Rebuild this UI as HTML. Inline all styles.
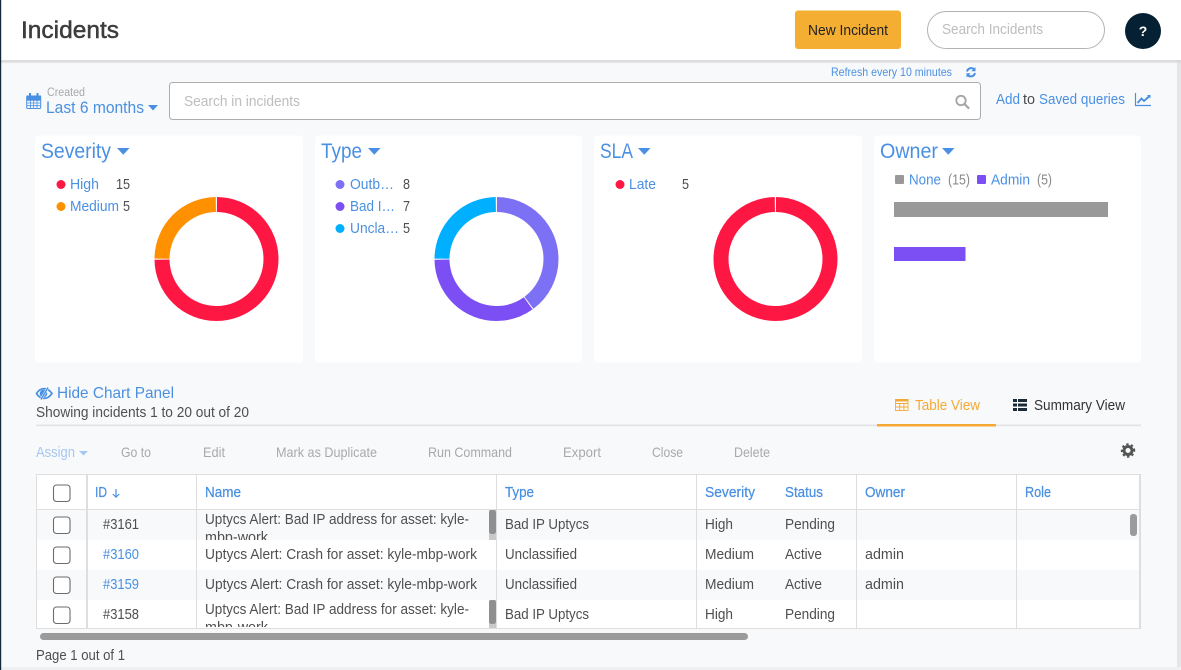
<!DOCTYPE html>
<html><head><meta charset="utf-8"><title>Incidents</title>
<style>
html,body{margin:0;padding:0;width:1181px;height:670px;overflow:hidden;background:#f8f9fb}
svg{display:block;filter:blur(.3px)}
text{font-family:"Liberation Sans",sans-serif;font-size:15px;fill:#4f4f4f}
.b{fill:#4a90e2}
.t{font-size:21px;fill:#4a90e2}
.g{fill:#a9a9a9;font-size:14px}
.h{fill:#4a90e2;font-size:15px;stroke:#4a90e2;stroke-width:.25px}
</style></head><body>
<svg width="1181" height="670" viewBox="0 0 1181 670" xmlns="http://www.w3.org/2000/svg">
<defs><filter id="s" x="-5%" y="-100%" width="110%" height="300%"><feGaussianBlur stdDeviation="0.8"/></filter>
<clipPath id="r1"><rect x="197" y="510" width="292" height="30"/></clipPath>
<clipPath id="r4"><rect x="197" y="600" width="292" height="27"/></clipPath></defs>
<rect width="1181" height="670" fill="#f8f9fb"/>
<rect x="1177" y="60" width="4" height="610" fill="#e6e6e8"/>
<rect x="0" y="667" width="1181" height="3" fill="#eef0f1"/>
<rect x="0" y="60" width="1181" height="2.500" fill="#d6d6d8" filter="url(#s)"/>
<rect width="1181" height="60" fill="#fff"/>
<rect width="1.200" height="670" fill="#14293c"/>

<text x="21" y="38" style="font-size:24px;fill:#3d3d3d;stroke:#3d3d3d;stroke-width:.5px" textLength="98" lengthAdjust="spacingAndGlyphs">Incidents</text>
<rect x="795" y="10.500" width="106" height="38.500" rx="3" fill="#f4ae32"/>
<text x="808" y="35" style="fill:#222" textLength="80" lengthAdjust="spacingAndGlyphs">New Incident</text>
<rect x="927.500" y="11.500" width="177" height="37" rx="18.500" fill="#fff" stroke="#b3b3b3"/>
<text x="942" y="34" style="fill:#bdbdbd" textLength="101" lengthAdjust="spacingAndGlyphs">Search Incidents</text>
<circle cx="1143" cy="31" r="18" fill="#062033"/>
<text x="1143" y="36" text-anchor="middle" font-weight="bold" style="font-size:14px;fill:#fff">?</text>

<text x="831" y="76" class="b" style="font-size:12px" textLength="121" lengthAdjust="spacingAndGlyphs">Refresh every 10 minutes</text>
<g fill="none" stroke="#4a90e2" stroke-width="2">
<path d="M967 71.500a4.300 4.300 0 0 1 7.500-1.800"/><path d="M975 73a4.300 4.300 0 0 1-7.500 1.800"/></g>
<path d="M975.500 67v4.200h-4.200zM966.500 77.500v-4.200h4.200z" fill="#4a90e2"/>

<g fill="none" stroke="#4a90e2"><rect x="26.700" y="96" width="14" height="12.500" rx="1"/>
<path d="M27 100.500h13.500M27 103h13.500M27 105.700h13.500M30.500 100v8M33.700 100v8M37 100v8" stroke-width=".8"/></g>
<rect x="26.500" y="95.500" width="14.500" height="4.500" fill="#4a90e2"/>
<rect x="29" y="93" width="2" height="4" fill="#4a90e2"/><rect x="36.500" y="93" width="2" height="4" fill="#4a90e2"/>
<text x="47" y="96" style="font-size:11.500px;fill:#a9a9a9" textLength="38" lengthAdjust="spacingAndGlyphs">Created</text>
<text x="46" y="113" class="b" style="font-size:17px" textLength="98" lengthAdjust="spacingAndGlyphs">Last 6 months</text>
<path d="M148 105h10l-5 5.500z" fill="#4a90e2"/>
<rect x="169.500" y="82.500" width="811" height="37" rx="3" fill="#fff" stroke="#adadad"/>
<text x="184" y="106" style="fill:#bdbdbd" textLength="116" lengthAdjust="spacingAndGlyphs">Search in incidents</text>
<circle cx="961" cy="100.500" r="4.700" fill="none" stroke="#a5a5a5" stroke-width="1.800"/>
<path d="M964.500 104l4 4" stroke="#a5a5a5" stroke-width="2.200" stroke-linecap="round"/>
<text x="996" y="104" class="b" textLength="24" lengthAdjust="spacingAndGlyphs">Add</text>
<text x="1023" y="104" style="fill:#4a4a4a" textLength="12" lengthAdjust="spacingAndGlyphs">to</text>
<text x="1039" y="104" class="b" textLength="86" lengthAdjust="spacingAndGlyphs">Saved queries</text>
<path d="M1135.500 93v12.500h15.500" fill="none" stroke="#4a90e2" stroke-width="1.200"/>
<path d="M1137.500 103l4-4.500 2.500 2.500 5.500-5" fill="none" stroke="#4a90e2" stroke-width="1.900"/>
<path d="M1147 95h3.500v3.500z" fill="#4a90e2"/>

<g fill="#fff"><rect x="35" y="135.500" width="268" height="227" rx="4"/><rect x="315" y="135.500" width="267" height="227" rx="4"/><rect x="594" y="135.500" width="268" height="227" rx="4"/><rect x="874" y="135.500" width="267" height="227" rx="4"/></g>

<text x="41" y="158" class="t" textLength="70" lengthAdjust="spacingAndGlyphs">Severity</text><path d="M117 148h12.500l-6.200 6.800z" fill="#4a90e2"/>
<text x="321" y="158" class="t" textLength="41" lengthAdjust="spacingAndGlyphs">Type</text><path d="M368 148h12.500l-6.200 6.800z" fill="#4a90e2"/>
<text x="600" y="158" class="t" textLength="33" lengthAdjust="spacingAndGlyphs">SLA</text><path d="M638 148h12.500l-6.200 6.800z" fill="#4a90e2"/>
<text x="880" y="158" class="t" textLength="58" lengthAdjust="spacingAndGlyphs">Owner</text><path d="M942 148h12.500l-6.200 6.800z" fill="#4a90e2"/>

<circle cx="61" cy="184.500" r="4.500" fill="#ff1744"/><text x="70" y="189" class="b" textLength="29" lengthAdjust="spacingAndGlyphs">High</text><text x="116" y="189" textLength="14" lengthAdjust="spacingAndGlyphs">15</text>
<circle cx="61" cy="206.500" r="4.500" fill="#ff9000"/><text x="70" y="211" class="b" textLength="49" lengthAdjust="spacingAndGlyphs">Medium</text><text x="123" y="211" textLength="7" lengthAdjust="spacingAndGlyphs">5</text>
<circle cx="340" cy="184.500" r="4.500" fill="#7c71f5"/><text x="350" y="189" class="b" textLength="44" lengthAdjust="spacingAndGlyphs">Outb…</text><text x="403" y="189" textLength="7" lengthAdjust="spacingAndGlyphs">8</text>
<circle cx="340" cy="206.500" r="4.500" fill="#7c4ff5"/><text x="350" y="211" class="b" textLength="45" lengthAdjust="spacingAndGlyphs">Bad I…</text><text x="403" y="211" textLength="7" lengthAdjust="spacingAndGlyphs">7</text>
<circle cx="340" cy="228.500" r="4.500" fill="#00b0ff"/><text x="350" y="233" class="b" textLength="49" lengthAdjust="spacingAndGlyphs">Uncla…</text><text x="403" y="233" textLength="7" lengthAdjust="spacingAndGlyphs">5</text>
<circle cx="620" cy="184.500" r="4.500" fill="#ff1744"/><text x="629" y="189" class="b" textLength="27" lengthAdjust="spacingAndGlyphs">Late</text><text x="682" y="189" textLength="7" lengthAdjust="spacingAndGlyphs">5</text>

<g fill="none" stroke-width="15">
<circle cx="216.500" cy="259" r="54.500" pathLength="360" stroke="#ff1744" stroke-dasharray="269 91" stroke-dashoffset="-.5" transform="rotate(-90 216.500 259)"/>
<circle cx="216.500" cy="259" r="54.500" pathLength="360" stroke="#ff9000" stroke-dasharray="89 271" stroke-dashoffset="-270.500" transform="rotate(-90 216.500 259)"/>
<circle cx="496.500" cy="259" r="54.500" pathLength="360" stroke="#7c71f5" stroke-dasharray="143 217" stroke-dashoffset="-.5" transform="rotate(-90 496.500 259)"/>
<circle cx="496.500" cy="259" r="54.500" pathLength="360" stroke="#7c4ff5" stroke-dasharray="125 235" stroke-dashoffset="-144.500" transform="rotate(-90 496.500 259)"/>
<circle cx="496.500" cy="259" r="54.500" pathLength="360" stroke="#00b0ff" stroke-dasharray="89 271" stroke-dashoffset="-270.500" transform="rotate(-90 496.500 259)"/>
<circle cx="775.500" cy="259" r="54.500" pathLength="360" stroke="#ff1744" stroke-dasharray="359 1" stroke-dashoffset="-.5" transform="rotate(-90 775.500 259)"/>
</g>

<rect x="895" y="175" width="9" height="9" rx="1" fill="#999"/><text x="909" y="184.500" class="b" textLength="32" lengthAdjust="spacingAndGlyphs">None</text><text x="948" y="184.500" style="fill:#8a8a8a" textLength="22" lengthAdjust="spacingAndGlyphs">(15)</text>
<rect x="977" y="175" width="9" height="9" rx="1" fill="#7c4ff5"/><text x="991" y="184.500" class="b" textLength="39" lengthAdjust="spacingAndGlyphs">Admin</text><text x="1037" y="184.500" style="fill:#8a8a8a" textLength="15" lengthAdjust="spacingAndGlyphs">(5)</text>
<rect x="894" y="202" width="214" height="15" fill="#999"/>
<rect x="894" y="247" width="71.500" height="14" fill="#7c4ff5"/>

<path d="M36.500 393.500c4-6.500 11-6.500 15.500 0-4.500 6.500-11.500 6.500-15.500 0z" fill="none" stroke="#4a90e2" stroke-width="1.700"/>
<circle cx="43.500" cy="393.500" r="3.800" fill="#4a90e2"/>
<path d="M41 399.500l7-12" stroke="#f8f9fb" stroke-width="2.400"/><path d="M41 399.500l7-12" stroke="#4a90e2" stroke-width="1.400"/>
<text x="57" y="398" class="b" style="font-size:16px" textLength="117" lengthAdjust="spacingAndGlyphs">Hide Chart Panel</text>
<text x="36" y="417" style="font-size:14.500px" textLength="213" lengthAdjust="spacingAndGlyphs">Showing incidents 1 to 20 out of 20</text>
<rect x="36" y="424.500" width="1105" height="1.800" fill="#e4e4e4"/>
<rect x="877" y="424" width="119" height="2.500" fill="#f5a935"/>
<g fill="none" stroke="#f5a935" stroke-width=".9"><rect x="895.500" y="399.500" width="12.500" height="11"/><path d="M895.500 403.500h12.500M895.500 407h12.500M899.700 403v8M903.900 403v8"/></g>
<rect x="895" y="399" width="13.500" height="2.500" fill="#f5a935"/>
<text x="915" y="410" style="fill:#f5a935" textLength="65" lengthAdjust="spacingAndGlyphs">Table View</text>
<g fill="#1c2b3a"><rect x="1013" y="399" width="4" height="3"/><rect x="1018" y="399" width="9" height="3"/><rect x="1013" y="403.500" width="4" height="3"/><rect x="1018" y="403.500" width="9" height="3"/><rect x="1013" y="408" width="4" height="3"/><rect x="1018" y="408" width="9" height="3"/></g>
<text x="1034" y="410" style="fill:#333" textLength="91" lengthAdjust="spacingAndGlyphs">Summary View</text>

<text x="36" y="457" style="font-size:14.500px;fill:#a6c8f0" textLength="39" lengthAdjust="spacingAndGlyphs">Assign</text>
<path d="M79 451h9l-4.500 4.500z" fill="#a6c8f0"/>
<text x="121" y="457" class="g" textLength="30" lengthAdjust="spacingAndGlyphs">Go to</text>
<text x="203" y="457" class="g" textLength="22" lengthAdjust="spacingAndGlyphs">Edit</text>
<text x="276" y="457" class="g" textLength="101" lengthAdjust="spacingAndGlyphs">Mark as Duplicate</text>
<text x="428" y="457" class="g" textLength="84" lengthAdjust="spacingAndGlyphs">Run Command</text>
<text x="563" y="457" class="g" textLength="38" lengthAdjust="spacingAndGlyphs">Export</text>
<text x="652" y="457" class="g" textLength="31" lengthAdjust="spacingAndGlyphs">Close</text>
<text x="734" y="457" class="g" textLength="36" lengthAdjust="spacingAndGlyphs">Delete</text>
<circle cx="1128" cy="450.500" r="4" fill="none" stroke="#555" stroke-width="3"/>
<circle cx="1128" cy="450.500" r="6" fill="none" stroke="#555" stroke-width="2.400" pathLength="32" stroke-dasharray="2 2" stroke-dashoffset="1"/>

<rect x="36.500" y="474.500" width="1104" height="154" fill="#fff" stroke="#dedede"/>
<rect x="37" y="510" width="1102" height="30" fill="#f8f9fb"/>
<rect x="37" y="570" width="1102" height="30" fill="#f8f9fb"/>
<text x="103" y="529" textLength="36" lengthAdjust="spacingAndGlyphs">#3161</text>
<text x="103" y="559" class="b" textLength="36" lengthAdjust="spacingAndGlyphs">#3160</text>
<text x="103" y="589" class="b" textLength="36" lengthAdjust="spacingAndGlyphs">#3159</text>
<text x="103" y="619" textLength="36" lengthAdjust="spacingAndGlyphs">#3158</text>
<text x="205" y="524" textLength="264" lengthAdjust="spacingAndGlyphs">Uptycs Alert: Bad IP address for asset: kyle-</text>
<text x="205" y="542" clip-path="url(#r1)" textLength="63" lengthAdjust="spacingAndGlyphs">mbp-work</text>
<text x="205" y="559" textLength="272" lengthAdjust="spacingAndGlyphs">Uptycs Alert: Crash for asset: kyle-mbp-work</text>
<text x="205" y="589" textLength="272" lengthAdjust="spacingAndGlyphs">Uptycs Alert: Crash for asset: kyle-mbp-work</text>
<text x="205" y="614" textLength="264" lengthAdjust="spacingAndGlyphs">Uptycs Alert: Bad IP address for asset: kyle-</text>
<text x="205" y="632" clip-path="url(#r4)" textLength="63" lengthAdjust="spacingAndGlyphs">mbp-work</text>
<text x="505" y="529" textLength="84" lengthAdjust="spacingAndGlyphs">Bad IP Uptycs</text>
<text x="505" y="559" textLength="72" lengthAdjust="spacingAndGlyphs">Unclassified</text>
<text x="505" y="589" textLength="72" lengthAdjust="spacingAndGlyphs">Unclassified</text>
<text x="505" y="619" textLength="84" lengthAdjust="spacingAndGlyphs">Bad IP Uptycs</text>
<text x="705" y="529" textLength="28" lengthAdjust="spacingAndGlyphs">High</text>
<text x="705" y="559" textLength="49" lengthAdjust="spacingAndGlyphs">Medium</text>
<text x="705" y="589" textLength="49" lengthAdjust="spacingAndGlyphs">Medium</text>
<text x="705" y="619" textLength="28" lengthAdjust="spacingAndGlyphs">High</text>
<text x="785" y="529" textLength="50" lengthAdjust="spacingAndGlyphs">Pending</text>
<text x="785" y="559" textLength="37" lengthAdjust="spacingAndGlyphs">Active</text>
<text x="785" y="589" textLength="37" lengthAdjust="spacingAndGlyphs">Active</text>
<text x="785" y="619" textLength="50" lengthAdjust="spacingAndGlyphs">Pending</text>
<text x="865" y="559" textLength="39" lengthAdjust="spacingAndGlyphs">admin</text>
<text x="865" y="589" textLength="39" lengthAdjust="spacingAndGlyphs">admin</text>

<text x="95" y="497" class="h" textLength="12" lengthAdjust="spacingAndGlyphs">ID</text>
<path d="M116 489v8M112.800 494l3.200 3.200 3.200-3.200" fill="none" stroke="#4a90e2" stroke-width="1.200"/>
<text x="205" y="497" class="h" textLength="36" lengthAdjust="spacingAndGlyphs">Name</text>
<text x="505" y="497" class="h" textLength="29" lengthAdjust="spacingAndGlyphs">Type</text>
<text x="705" y="497" class="h" textLength="50" lengthAdjust="spacingAndGlyphs">Severity</text>
<text x="785" y="497" class="h" textLength="38" lengthAdjust="spacingAndGlyphs">Status</text>
<text x="865" y="497" class="h" textLength="40" lengthAdjust="spacingAndGlyphs">Owner</text>
<text x="1025" y="497" class="h" textLength="26" lengthAdjust="spacingAndGlyphs">Role</text>

<rect x="37" y="509" width="1102" height="1" fill="#dedede"/>
<rect x="86" y="475" width="2" height="153" fill="#dedede"/>
<g fill="#dedede"><rect x="196" y="475" width="1" height="153"/><rect x="496" y="475" width="1" height="153"/><rect x="696" y="475" width="1" height="153"/><rect x="856" y="475" width="1" height="153"/><rect x="1016" y="475" width="1" height="153"/><rect x="1139" y="475" width="2" height="153"/></g>
<g fill="#fff" stroke="#6b6b6b" stroke-width="1.100">
<rect x="53.500" y="485" width="16.500" height="16.500" rx="3"/><rect x="53.500" y="517" width="16.500" height="16.500" rx="3"/><rect x="53.500" y="547" width="16.500" height="16.500" rx="3"/><rect x="53.500" y="577" width="16.500" height="16.500" rx="3"/><rect x="53.500" y="607" width="16.500" height="16.500" rx="3"/></g>
<rect x="489" y="510" width="7" height="30" fill="#c9c9c9"/><rect x="489" y="510" width="7" height="24" rx="2.500" fill="#8f8f8f"/>
<rect x="489" y="600" width="7" height="28" fill="#c9c9c9"/><rect x="489" y="600" width="7" height="24" rx="2.500" fill="#8f8f8f"/>
<rect x="1130" y="514" width="7" height="22" rx="3" fill="#9b9b9b"/>
<rect x="40" y="633" width="708" height="7" rx="3.500" fill="#9b9b9b"/>
<text x="36" y="660" style="font-size:14.500px" textLength="89" lengthAdjust="spacingAndGlyphs">Page 1 out of 1</text>
</svg>
</body></html>
